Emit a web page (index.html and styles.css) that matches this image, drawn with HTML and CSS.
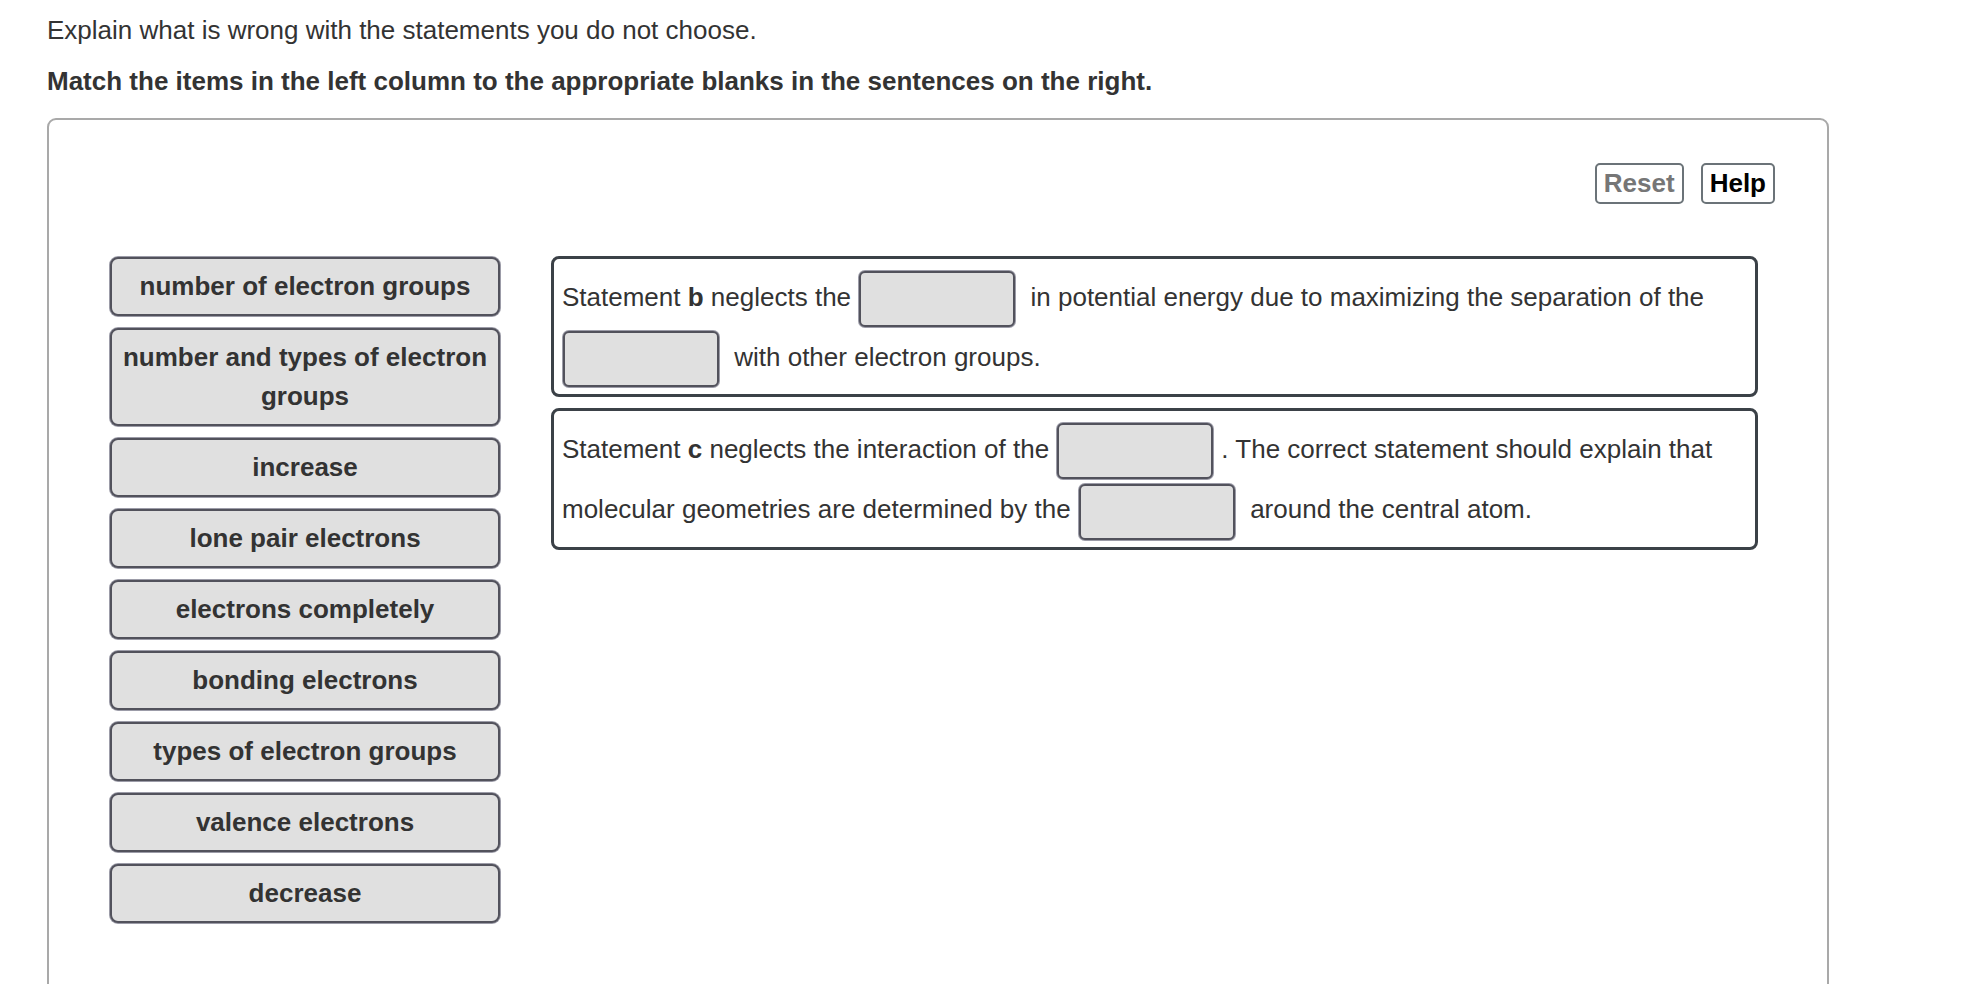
FILE: index.html
```html
<!DOCTYPE html>
<html lang="en">
<head>
<meta charset="utf-8">
<title>Match items</title>
<link rel="stylesheet" href="styles.css">
</head>
<body>
<div class="page">
  <p class="intro">Explain what is wrong with the statements you do not choose.</p>
  <p class="instruction">Match the items in the left column to the appropriate blanks in the sentences on the right.</p>
  <div class="panel">
    <div class="toolbar">
      <button class="tool-btn disabled">Reset</button>
      <button class="tool-btn">Help</button>
    </div>
    <div class="workspace">
      <div class="items">
        <div class="item">number of electron groups</div>
        <div class="item">number and types of electron groups</div>
        <div class="item">increase</div>
        <div class="item">lone pair electrons</div>
        <div class="item">electrons completely</div>
        <div class="item">bonding electrons</div>
        <div class="item">types of electron groups</div>
        <div class="item">valence electrons</div>
        <div class="item">decrease</div>
      </div>
      <div class="sentences">
        <div class="sentence">Statement <b>b</b> neglects the <span class="blank"></span> in potential energy due to maximizing the separation of the <span class="blank"></span> with other electron groups.</div>
        <div class="sentence">Statement <b>c</b> neglects the interaction of the <span class="blank"></span>. The correct statement should explain that molecular geometries are determined by the <span class="blank"></span> around the central atom.</div>
      </div>
    </div>
  </div>
</div>
</body>
</html>
```
FILE: styles.css
```css
html, body {
  margin: 0;
  padding: 0;
  background: #ffffff;
}

body {
  font-family: "Liberation Sans", Arial, Helvetica, sans-serif;
  font-size: 26px;
  line-height: 39px;
  color: #333333;
}

.page {
  padding: 11px 0 0 47px;
}

.intro {
  margin: 0;
}

.instruction {
  margin: 12px 0 0 0;
  font-weight: bold;
}

.panel {
  margin-top: 17px;
  width: 1782px;
  box-sizing: border-box;
  height: 900px;
  border: 2px solid #a9a9a9;
  border-radius: 9px;
  padding: 43px 52px 0 60px;
}

.toolbar {
  display: flex;
  justify-content: flex-end;
  gap: 17px;
}

.tool-btn {
  font-family: inherit;
  font-size: 26px;
  font-weight: bold;
  line-height: 37px;
  height: 41px;
  padding: 0 7px;
  margin: 0;
  background: #ffffff;
  color: #000000;
  border: 2px solid #6b7378;
  border-radius: 5px;
}

.tool-btn.disabled {
  color: #767676;
}

.workspace {
  display: flex;
  align-items: flex-start;
  gap: 50px;
  margin-top: 52px;
}

.items {
  width: 392px;
  display: flex;
  flex-direction: column;
  gap: 12px;
  padding-top: 1px;
}

.item {
  margin: 0 1px;
  background: #e0e0e0;
  border: 2px solid #52525c;
  border-radius: 8px;
  box-shadow: 0 0 0 1px #9c9ca8;
  padding: 8px 6px;
  text-align: center;
  font-weight: bold;
  color: #333333;
}

.sentences {
  width: 1207px;
  display: flex;
  flex-direction: column;
  gap: 11px;
}

.sentence {
  border: 3px solid #3b4147;
  border-radius: 8px;
  padding: 8px 6px 7px 8px;
  line-height: 60px;
  color: #333333;
}

.blank {
  display: inline-block;
  width: 156px;
  height: 56px;
  box-sizing: border-box;
  vertical-align: middle;
  margin: 0 8px 0 1px;
  background: #e0e0e0;
  border: 2px solid #52525c;
  border-radius: 6px;
  box-shadow: 0 0 0 1px #9c9ca8;
}
```
